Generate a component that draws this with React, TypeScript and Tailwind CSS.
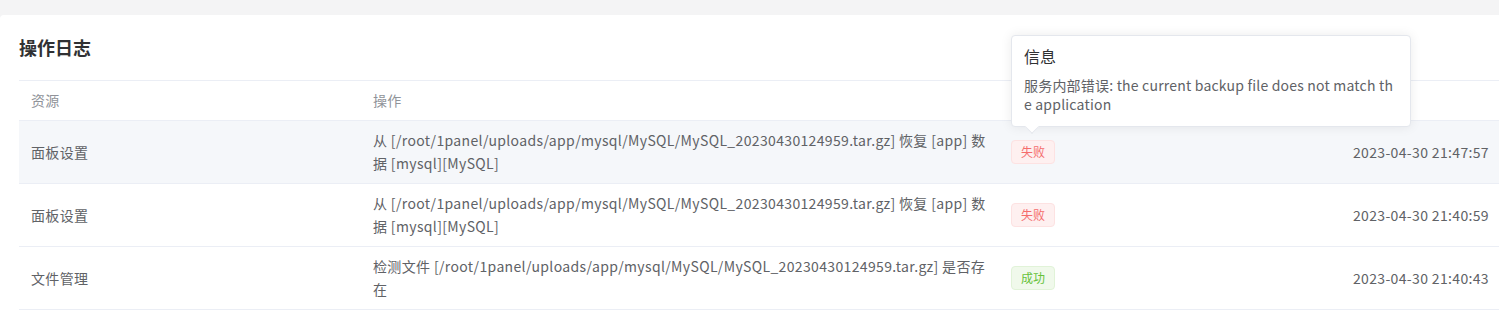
import React from 'react'

const font = '"Noto Sans CJK SC", "Noto Sans", sans-serif'

interface LogRow {
  source: string
  detail: string
  ok: boolean
  time: string
  hover?: boolean
}

const rows: LogRow[] = [
  {
    source: '面板设置',
    detail: '从 [/root/1panel/uploads/app/mysql/MySQL/MySQL_20230430124959.tar.gz] 恢复 [app] 数据 [mysql][MySQL]',
    ok: false,
    time: '2023-04-30 21:47:57',
    hover: true,
  },
  {
    source: '面板设置',
    detail: '从 [/root/1panel/uploads/app/mysql/MySQL/MySQL_20230430124959.tar.gz] 恢复 [app] 数据 [mysql][MySQL]',
    ok: false,
    time: '2023-04-30 21:40:59',
  },
  {
    source: '文件管理',
    detail: '检测文件 [/root/1panel/uploads/app/mysql/MySQL/MySQL_20230430124959.tar.gz] 是否存在',
    ok: true,
    time: '2023-04-30 21:40:43',
  },
]

function StatusTag({ ok }: { ok: boolean }) {
  return ok ? (
    <span className="inline-flex h-6 items-center rounded border border-[#e1f3d8] bg-[#f0f9eb] px-[9px] text-xs tracking-normal text-[#67c23a]">
      成功
    </span>
  ) : (
    <span className="inline-flex h-6 items-center rounded border border-[#fde2e2] bg-[#fef0f0] px-[9px] text-xs tracking-normal text-[#f56c6c]">
      失败
    </span>
  )
}

export default function App() {
  return (
    <div className="h-[313px] w-[1499px] overflow-hidden bg-[#f4f4f5] pt-[15px]" style={{ fontFamily: font }}>
      <div className="relative h-[320px] w-[1520px] rounded-tl bg-white pl-[19px]">
        {/* Title */}
        <div className="flex h-[65px] items-center pb-[2px] text-lg font-bold text-[#303133]">操作日志</div>

        {/* Table */}
        <table className="w-[1482px] table-fixed border-collapse text-sm tracking-[0.35px] text-[#606266]">
          <colgroup>
            <col className="w-[342px]" />
            <col className="w-[638px]" />
            <col className="w-[200px]" />
            <col className="w-[302px]" />
          </colgroup>
          <thead>
            <tr className="border-y border-[#ebeef5] text-[#909399]">
              <th className="px-3 py-2 text-left font-normal leading-[23px]">资源</th>
              <th className="px-3 py-2 text-left font-normal leading-[23px]">操作</th>
              <th className="px-3 py-2" />
              <th className="px-3 py-2" />
            </tr>
          </thead>
          <tbody>
            {rows.map((r, i) => (
              <tr key={i} className={`border-b border-[#ebeef5] ${r.hover ? 'bg-[#f5f7fa]' : ''}`}>
                <td className="px-3 py-2 align-middle leading-[23px]">{r.source}</td>
                <td className="px-3 py-2 align-middle leading-[23px] break-all">{r.detail}</td>
                <td className="px-3 py-2 align-middle leading-[23px]">
                  <StatusTag ok={r.ok} />
                </td>
                <td className="px-3 py-2 text-right align-middle leading-[23px]">{r.time}</td>
              </tr>
            ))}
          </tbody>
        </table>

        {/* Popover over the failed tag */}
        <div className="absolute left-[1011px] top-[20px] w-[400px] rounded border border-[#e4e7ed] bg-white p-3 shadow-[0_0_12px_rgba(0,0,0,0.08)]">
          <div className="mb-3 text-base leading-none text-[#303133]">信息</div>
          <div className="break-all text-sm leading-[19px] tracking-[0.2px] text-[#606266]">
            服务内部错误: the current backup file does not match the application
          </div>
          <span className="absolute -bottom-[6px] left-[15px] h-[10px] w-[10px] rotate-45 border-b border-r border-[#e4e7ed] bg-white" />
        </div>
      </div>
    </div>
  )
}
